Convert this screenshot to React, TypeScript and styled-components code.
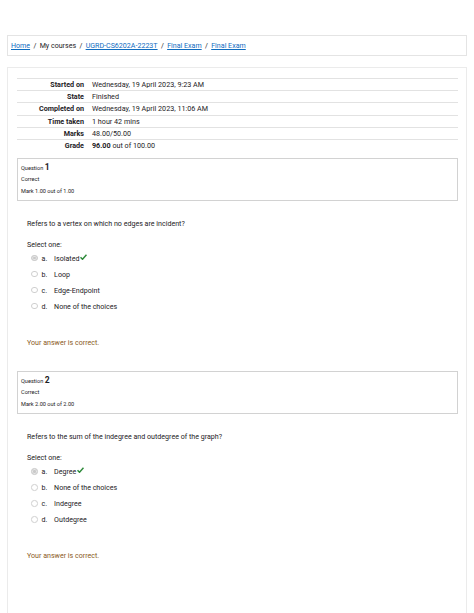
import styled, { createGlobalStyle } from "styled-components";

const GlobalStyle = createGlobalStyle`
  body {
    margin: 0;
    background: #ffffff;
    font-family: Roboto, "Open Sans", sans-serif;
    color: #1d2125;
  }
`;

const Page = styled.div`
  width: 460px;
  padding: 35px 0 0 7px;
`;

const Breadcrumb = styled.nav`
  height: 21px;
  box-sizing: border-box;
  border: 1px solid #e4e4e4;
  display: flex;
  align-items: center;
  gap: 3.3px;
  padding-left: 3px;
  font-size: 7.1px;
`;

const Crumb = styled.a`
  color: #0f6cbf;
  text-decoration: underline;
`;

const Sep = styled.span`
  color: #1d2125;
`;

const Card = styled.div`
  margin-top: 11px;
  border: 1px solid #ebebeb;
  border-bottom: none;
  padding: 10px 8px 60px 9px;
`;

const Summary = styled.div`
  display: grid;
  grid-template-columns: 71px 1fr;
  font-size: 7.2px;
`;

const Label = styled.div`
  box-sizing: border-box;
  border-top: 1px solid #e2e2e2;
  height: 12.2px;
  line-height: 11.2px;
  text-align: right;
  font-weight: 700;
  padding-right: 4px;
`;

const Value = styled.div`
  box-sizing: border-box;
  border-top: 1px solid #e2e2e2;
  height: 12.2px;
  line-height: 11.2px;
  padding-left: 4px;
`;

const InfoBox = styled.div`
  margin-top: 7px;
  border: 1px solid #d2d2d2;
  padding: 3px;
  font-size: 5.6px;
`;

const InfoLine = styled.div`
  height: 11.7px;
  line-height: 11.7px;
`;

const QNo = styled.span`
  font-size: 8.6px;
  font-weight: 700;
`;

const Content = styled.div`
  padding-left: 10px;
  font-size: 7.1px;
`;

const QText = styled.div`
  margin-top: 17px;
  line-height: 12px;
`;

const Prompt = styled.div`
  margin-top: 9px;
  line-height: 12px;
`;

const Options = styled.div`
  margin-top: -1px;
  padding-left: 4px;
`;

const Option = styled.div`
  height: 16px;
  display: flex;
  align-items: center;
`;

const Radio = styled.span<{ checked?: boolean }>`
  width: 4.6px;
  height: 4.6px;
  border-radius: 50%;
  border: 0.6px solid #cfcfcf;
  background: ${(p) => (p.checked ? "#c9c9c9" : "#ffffff")};
  box-shadow: ${(p) => (p.checked ? "inset 0 0 0 1px #e6e6e6" : "none")};
  margin-right: 4px;
`;

const Letter = styled.span`
  width: 12.5px;
`;

const Check = styled.svg`
  width: 7px;
  height: 6px;
  margin-left: 0.5px;
  margin-top: -3px;
`;

const Feedback = styled.div`
  margin-top: 23px;
  line-height: 12px;
  color: #8a5a1c;
`;

const QuestionWrap = styled.div`
  & + & {
    margin-top: 22px;
  }
`;

type Q = {
  no: number;
  mark: string;
  text: string;
  options: string[];
};

const questions: Q[] = [
  {
    no: 1,
    mark: "Mark 1.00 out of 1.00",
    text: "Refers to a vertex on which no edges are incident?",
    options: ["Isolated", "Loop", "Edge-Endpoint", "None of the choices"],
  },
  {
    no: 2,
    mark: "Mark 2.00 out of 2.00",
    text: "Refers to the sum of the indegree and outdegree of the graph?",
    options: ["Degree", "None of the choices", "Indegree", "Outdegree"],
  },
];

const summary: [string, React.ReactNode][] = [
  ["Started on", "Wednesday, 19 April 2023, 9:23 AM"],
  ["State", "Finished"],
  ["Completed on", "Wednesday, 19 April 2023, 11:06 AM"],
  ["Time taken", "1 hour 42 mins"],
  ["Marks", "48.00/50.00"],
  [
    "Grade",
    <>
      <b>96.00</b> out of 100.00
    </>,
  ],
];

const Question = ({ q }: { q: Q }) => (
  <QuestionWrap>
    <InfoBox>
      <InfoLine>
        Question <QNo>{q.no}</QNo>
      </InfoLine>
      <InfoLine>Correct</InfoLine>
      <InfoLine>{q.mark}</InfoLine>
    </InfoBox>
    <Content>
      <QText>{q.text}</QText>
      <Prompt>Select one:</Prompt>
      <Options>
        {q.options.map((o, i) => (
          <Option key={o}>
            <Radio checked={i === 0} />
            <Letter>{"abcd"[i]}.</Letter>
            <span>{o}</span>
            {i === 0 ? (
              <Check viewBox="0 0 14 12">
                <path d="M1 6.5 L5 10.5 L13 1.5" fill="none" stroke="#2e8a3a" strokeWidth="3" />
              </Check>
            ) : null}
          </Option>
        ))}
      </Options>
      <Feedback>Your answer is correct.</Feedback>
    </Content>
  </QuestionWrap>
);

export default function App() {
  return (
    <Page>
      <GlobalStyle />
      <Breadcrumb>
        <Crumb>Home</Crumb>
        <Sep>/</Sep>
        <span>My courses</span>
        <Sep>/</Sep>
        <Crumb>UGRD-CS6202A-2223T</Crumb>
        <Sep>/</Sep>
        <Crumb>Final Exam</Crumb>
        <Sep>/</Sep>
        <Crumb>Final Exam</Crumb>
      </Breadcrumb>
      <Card>
        <Summary>
          {summary.map(([k, v]) => (
            <>
              <Label key={k}>{k}</Label>
              <Value key={k + "v"}>{v}</Value>
            </>
          ))}
        </Summary>
        {questions.map((q) => (
          <Question key={q.no} q={q} />
        ))}
      </Card>
    </Page>
  );
}
